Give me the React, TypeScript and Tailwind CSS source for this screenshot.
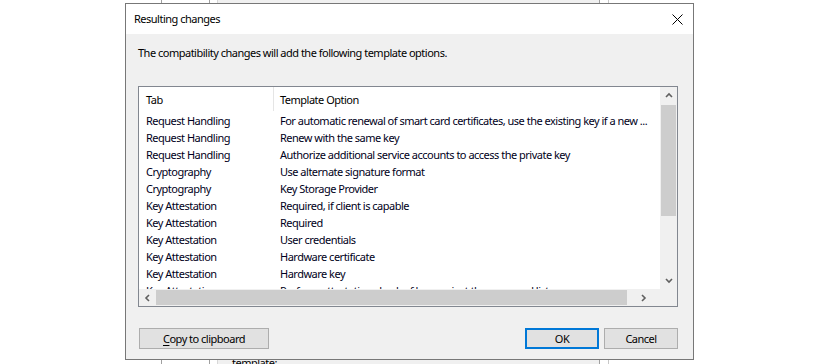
import React from "react";

const rows: [string, string][] = [
  ["Request Handling", "For automatic renewal of smart card certificates, use the existing key if a new ..."],
  ["Request Handling", "Renew with the same key"],
  ["Request Handling", "Authorize additional service accounts to access the private key"],
  ["Cryptography", "Use alternate signature format"],
  ["Cryptography", "Key Storage Provider"],
  ["Key Attestation", "Required, if client is capable"],
  ["Key Attestation", "Required"],
  ["Key Attestation", "User credentials"],
  ["Key Attestation", "Hardware certificate"],
  ["Key Attestation", "Hardware key"],
  ["Key Attestation", "Perform attestation check of key against the approved list"],
];

function Chevron({ dir }: { dir: "up" | "down" | "left" | "right" }) {
  const d =
    dir === "up"
      ? "M1 5 L4 2 L7 5"
      : dir === "down"
      ? "M1 2 L4 5 L7 2"
      : dir === "left"
      ? "M5 1 L2 4 L5 7"
      : "M2 1 L5 4 L2 7";
  return (
    <svg width="8" height="8" viewBox="0 0 8 8">
      <path d={d} fill="none" stroke="#606060" strokeWidth="1.6" />
    </svg>
  );
}

export default function App() {
  return (
    <div className="relative w-[823px] h-[364px] overflow-hidden bg-white font-['Noto_Sans',sans-serif] text-[11px] tracking-[-0.5px] text-black">
      {/* window behind */}
      <div className="absolute left-[161px] top-0 h-full w-px bg-[#a0a0a0]" />
      <div className="absolute left-[209px] top-0 h-full w-px bg-[#a0a0a0]" />
      <div className="absolute left-[217px] top-0 h-full w-[382px] bg-[#f0f0f0] border-l border-[#d8d8d8]">
        <div className="absolute left-[14px] top-[355px] leading-[16px]">template:</div>
      </div>
      <div className="absolute left-[599px] top-0 h-full w-px bg-[#a0a0a0]" />
      <div className="absolute left-[608px] top-0 h-full w-px bg-[#c8c8c8]" />

      {/* dialog */}
      <div className="absolute left-[125px] top-[3px] w-[569px] h-[357px] border border-[#777777] flex flex-col bg-[#f0f0f0]">
        <div className="h-[30px] bg-white flex items-center justify-between pl-[8px] pr-[10px] shrink-0">
          <span className="leading-[16px]">Resulting changes</span>
          <svg width="11" height="11" viewBox="0 0 11 11">
            <path d="M0.5 0.5 L10.5 10.5 M10.5 0.5 L0.5 10.5" stroke="#000" strokeWidth="1" />
          </svg>
        </div>
        <div className="flex-1 flex flex-col pl-[12px] pr-[15px]">
          <div className="mt-[11px] leading-[16px] h-[16px]">
            The compatibility changes will add the following template options.
          </div>
          {/* list */}
          <div className="mt-[25px] h-[221px] w-[540px] border border-[#828790] bg-white flex flex-col">
            <div className="flex flex-1 min-h-0">
              <div className="flex-1 min-w-0 overflow-hidden flex flex-col">
                <div className="h-[25px] shrink-0 flex items-center">
                  <div className="w-[134px] shrink-0 pl-[7px] leading-[16px]">Tab</div>
                  <div className="w-px h-[24px] shrink-0 bg-[#e5e5e5] self-start" />
                  <div className="pl-[6px] leading-[16px]">Template Option</div>
                </div>
                {rows.map(([a, b], i) => (
                  <div key={i} className="h-[17px] shrink-0 flex items-center whitespace-nowrap">
                    <div className="w-[135px] shrink-0 pl-[7px] leading-[16px] text-[#000020]">{a}</div>
                    <div className="pl-[6px] leading-[16px] text-[#000020]">{b}</div>
                  </div>
                ))}
              </div>
              {/* vertical scrollbar */}
              <div className="w-[17px] bg-[#f0f0f0] flex flex-col shrink-0">
                <div className="h-[17px] flex items-center justify-center">
                  <Chevron dir="up" />
                </div>
                <div className="flex-1 flex flex-col">
                  <div className="h-[111px] mt-[1px] mx-[1px] bg-[#cdcdcd]" />
                </div>
                <div className="h-[17px] flex items-center justify-center">
                  <Chevron dir="down" />
                </div>
              </div>
            </div>
            {/* horizontal scrollbar */}
            <div className="h-[17px] flex shrink-0">
              <div className="flex-1 bg-[#f0f0f0] flex items-center">
                <div className="w-[17px] h-[17px] flex items-center justify-center">
                  <Chevron dir="left" />
                </div>
                <div className="w-[471px] h-[15px] bg-[#cdcdcd]" />
                <div className="flex-1 h-[17px] flex items-center justify-center">
                  <Chevron dir="right" />
                </div>
              </div>
              <div className="w-[17px] bg-[#f0f0f0]" />
            </div>
          </div>
          {/* buttons */}
          <div className="mt-[21px] flex items-center">
            <button className="ml-px w-[130px] h-[21px] bg-[#e1e1e1] border border-[#adadad] leading-[16px]">
              <span className="underline underline-offset-2">C</span>opy to clipboard
            </button>
            <div className="flex-1" />
            <button className="w-[74px] h-[21px] bg-[#e1e1e1] border-2 border-[#0078d7] leading-[16px]">
              OK
            </button>
            <button className="ml-[5px] w-[74px] h-[21px] bg-[#e1e1e1] border border-[#adadad] leading-[16px]">
              Cancel
            </button>
          </div>
        </div>
      </div>
    </div>
  );
}
